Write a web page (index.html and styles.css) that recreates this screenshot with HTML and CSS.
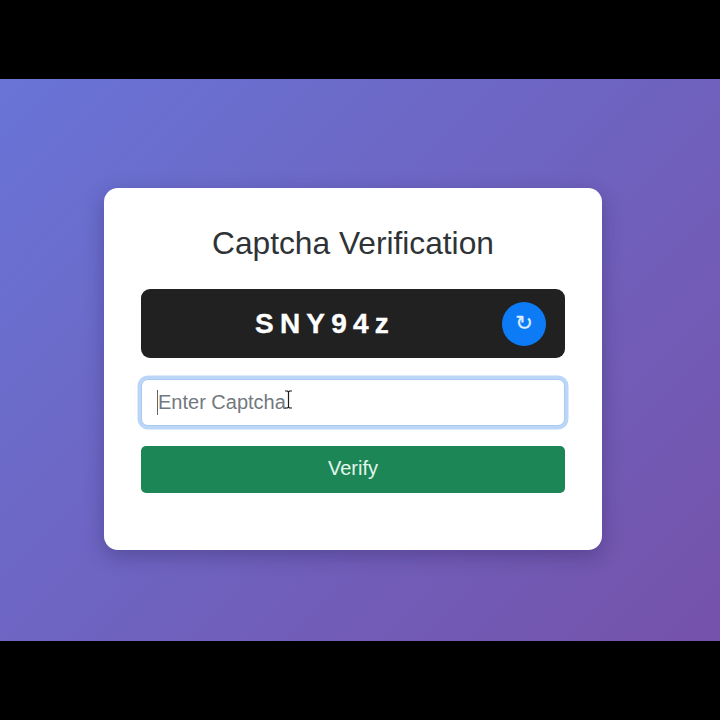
FILE: index.html
```html
<!DOCTYPE html>
<html lang="en">
<head>
<meta charset="utf-8">
<title>Captcha Verification</title>
<link rel="stylesheet" href="styles.css">
</head>
<body>
<div class="letterbox"></div>
<main class="stage">
  <section class="card">
    <h1 class="title">Captcha Verification</h1>
    <div class="captcha">
      <span class="code">SNY94z</span>
      <button class="refresh" type="button" aria-label="Refresh">↻</button>
    </div>
    <div class="field">
      <span class="caret"></span>
      <span class="placeholder">Enter Captcha</span>
      <svg class="ibeam" width="9" height="19" viewBox="0 0 9 19" aria-hidden="true">
        <path d="M1 1h2.5l1 1 1-1H8M4.5 2v15M1 18h2.5l1-1 1 1H8" fill="none" stroke="#1c1c1c" stroke-width="1.2"/>
      </svg>
    </div>
    <button class="verify" type="button">Verify</button>
  </section>
</main>
<div class="letterbox"></div>
</body>
</html>
```

FILE: styles.css
```css
* { box-sizing: border-box; }
html, body { margin: 0; height: 720px; overflow: hidden; }
body {
  width: 720px;
  display: flex;
  flex-direction: column;
  background: #000;
  font-family: "Liberation Sans", Arial, sans-serif;
}
.letterbox { height: 79px; flex: none; background: #000; }
.stage {
  height: 562px;
  flex: none;
  padding: 109px 118px 91px 104px;
  background: linear-gradient(135deg, #6874d6 0%, #7552aa 100%);
}
.card {
  width: 498px;
  height: 362px;
  padding: 37px;
  background: #fff;
  border-radius: 14px;
  box-shadow: 0 6px 20px rgba(30, 20, 70, 0.3);
}
.title {
  margin: 0 0 27px;
  height: 37px;
  font-size: 31.7px;
  line-height: 37px;
  font-weight: 400;
  text-align: center;
  color: #2f3336;
}
.captcha {
  height: 69px;
  display: flex;
  align-items: center;
  justify-content: space-between;
  padding: 0 19px 0 114px;
  background: #212121;
  border-radius: 9px;
}
.code {
  font-size: 28px;
  font-weight: 700;
  letter-spacing: 6.2px;
  color: #fff;
  -webkit-text-stroke: 0.4px #fff;
}
.refresh {
  width: 44px;
  height: 44px;
  padding: 0 0 2px;
  border: 0;
  border-radius: 50%;
  background: #0d7bf6;
  color: #dcecff;
  font-family: "DejaVu Sans", sans-serif;
  font-size: 21px;
  line-height: 42px;
  -webkit-text-stroke: 0.3px #dcecff;
}
.field {
  position: relative;
  height: 47px;
  margin-top: 21px;
  padding-left: 16px;
  display: flex;
  align-items: center;
  background: #fff;
  border: 1px solid #a9c9f2;
  border-radius: 7px;
  box-shadow: 0 0 0 3.5px #bcd6f8;
}
.caret { position: absolute; left: 15px; top: 10px; width: 1px; height: 25px; background: #666; }
.placeholder { font-size: 20px; line-height: 44px; color: #72787e; position: relative; top: -1px; }
.ibeam { position: absolute; left: 142px; top: 10px; }
.verify {
  display: block;
  width: 100%;
  height: 47px;
  margin-top: 20px;
  padding: 0 0 2px;
  border: 0;
  border-radius: 5px;
  background: #1d8656;
  color: #e4f7ec;
  font-family: inherit;
  font-size: 20px;
}
```
